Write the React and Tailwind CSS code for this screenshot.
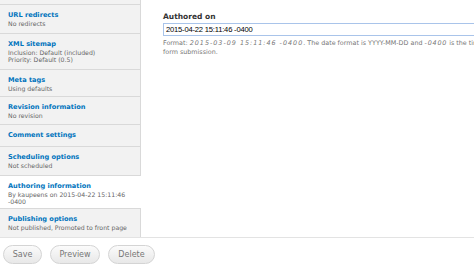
import React from 'react';

const tabs = [
  { title: 'URL redirects', lines: ['No redirects'], h: 'h-[29px]' },
  { title: 'XML sitemap', lines: ['Inclusion: Default (included)', 'Priority: Default (0.5)'], h: 'h-[36px]' },
  { title: 'Meta tags', lines: ['Using defaults'], h: 'h-[27px]' },
  { title: 'Revision information', lines: ['No revision'], h: 'h-[28px]' },
  { title: 'Comment settings', lines: [], h: 'h-[22px]' },
  { title: 'Scheduling options', lines: ['Not scheduled'], h: 'h-[29px]' },
  { title: 'Authoring information', lines: ['By kaupeens on 2015-04-22 15:11:46', '-0400'], h: 'h-[33px]', active: true },
  { title: 'Publishing options', lines: ['Not published, Promoted to front page'], h: 'h-[29px]' },
];

const Tab = ({ tab }) => (
  <div
    className={
      'border-t border-[#d9d9d9] pl-2 pr-1 pt-[5px] ' +
      tab.h +
      (tab.active ? ' bg-white' : ' bg-[#f2f2f2] border-r border-r-[#d9d9d9]')
    }
  >
    <div className="text-[6.6px] font-bold text-[#0074bd] leading-[10px]">{tab.title}</div>
    {tab.lines.map((l) => (
      <div key={l} className="text-[6.2px] text-[#666] leading-[7px]">{l}</div>
    ))}
  </div>
);

export default function App() {
  return (
    <div className="w-[474px] h-[271px] bg-white overflow-hidden" style={{ fontFamily: '"DejaVu Sans", Verdana, sans-serif' }}>
      <div className="flex border-b border-[#e3e3e3]">
        {/* vertical tabs */}
        <div className="w-[141px] shrink-0 bg-[#f2f2f2]">
          <div className="h-[4px] border-r border-[#d9d9d9]" />
          {tabs.map((t) => (
            <Tab key={t.title} tab={t} />
          ))}
        </div>

        {/* pane */}
        <div className="flex-1 min-w-0 pl-[22px] pt-[12px] overflow-hidden">
          <div className="text-[7.5px] font-bold text-[#333] leading-[10px]">Authored on</div>
          <div className="mt-[1px] h-[13px] border border-[#a9c4ea] -mr-2 pl-[2px] flex items-center">
            <span className="text-[7.6px] text-black tracking-[-0.2px]" style={{ fontFamily: '"Liberation Sans", Arial, sans-serif' }}>
              2015-04-22 15:11:46 -0400
            </span>
          </div>
          <div className="mt-[3px] text-[6.4px] text-[#777] leading-[9px] whitespace-nowrap">
            Format: <em className="tracking-[1px]">2015-03-09 15:11:46 -0400</em>. The date format is YYYY-MM-DD and{' '}
            <em className="tracking-[0.8px]">-0400</em> is the time zone offset from UTC.
          </div>
          <div className="text-[6.4px] text-[#777] leading-[9px]">form submission.</div>
        </div>
      </div>

      {/* actions */}
      <div className="flex gap-2 pl-[3px] pt-[7px]">
        {[
          ['Save', 'w-[39px]'],
          ['Preview', 'w-[50px]'],
          ['Delete', 'w-[47px]'],
        ].map(([b, w]) => (
          <button
            key={b}
            className={
              'h-[19px] rounded-full border border-[#d4d4d4] bg-gradient-to-b from-[#fbfbfb] to-[#e8e8e8] text-[8px] text-[#777] ' + w
            }
          >
            {b}
          </button>
        ))}
      </div>
    </div>
  );
}
